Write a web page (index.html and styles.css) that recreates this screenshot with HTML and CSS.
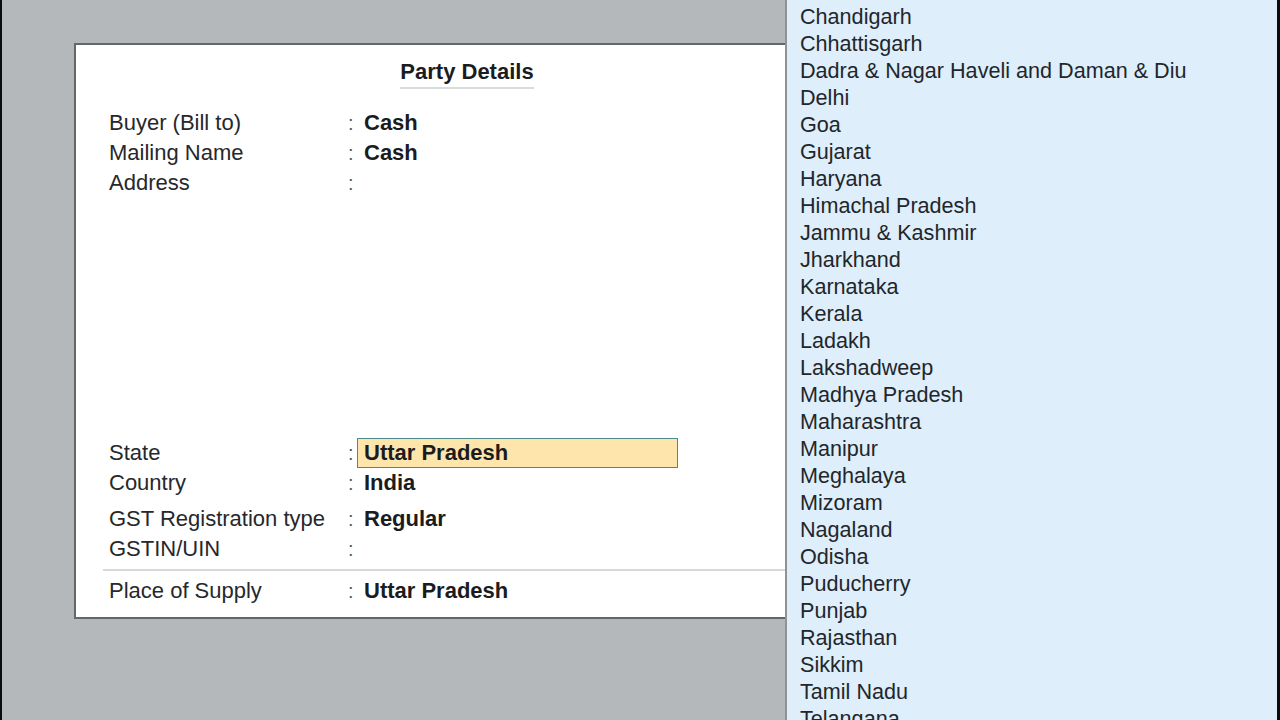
FILE: index.html
```html
<!DOCTYPE html>
<html lang="en">
<head>
<meta charset="utf-8">
<title>Party Details</title>
<link rel="stylesheet" href="styles.css">
</head>
<body>
<div class="screen">
  <div class="edge"></div>
  <main class="workspace">
    <section class="dialog">
      <h1 class="title">Party Details</h1>
      <div class="rows">
        <div class="row"><span class="label">Buyer (Bill to)</span><span class="colon">:</span><span class="value">Cash</span></div>
        <div class="row"><span class="label">Mailing Name</span><span class="colon">:</span><span class="value">Cash</span></div>
        <div class="row"><span class="label">Address</span><span class="colon">:</span><span class="value"></span></div>
        <div class="spacer"></div>
        <div class="row"><span class="label">State</span><span class="colon">:</span><span class="value field">Uttar Pradesh</span></div>
        <div class="row"><span class="label">Country</span><span class="colon">:</span><span class="value">India</span></div>
        <div class="row gap"><span class="label">GST Registration type</span><span class="colon">:</span><span class="value">Regular</span></div>
        <div class="row"><span class="label">GSTIN/UIN</span><span class="colon">:</span><span class="value"></span></div>
        <div class="rule"></div>
        <div class="row"><span class="label">Place of Supply</span><span class="colon">:</span><span class="value">Uttar Pradesh</span></div>
      </div>
    </section>
  </main>
  <aside class="list">
    <ul>
      <li>Chandigarh</li>
      <li>Chhattisgarh</li>
      <li>Dadra &amp; Nagar Haveli and Daman &amp; Diu</li>
      <li>Delhi</li>
      <li>Goa</li>
      <li>Gujarat</li>
      <li>Haryana</li>
      <li>Himachal Pradesh</li>
      <li>Jammu &amp; Kashmir</li>
      <li>Jharkhand</li>
      <li>Karnataka</li>
      <li>Kerala</li>
      <li>Ladakh</li>
      <li>Lakshadweep</li>
      <li>Madhya Pradesh</li>
      <li>Maharashtra</li>
      <li>Manipur</li>
      <li>Meghalaya</li>
      <li>Mizoram</li>
      <li>Nagaland</li>
      <li>Odisha</li>
      <li>Puducherry</li>
      <li>Punjab</li>
      <li>Rajasthan</li>
      <li>Sikkim</li>
      <li>Tamil Nadu</li>
      <li>Telangana</li>
    </ul>
  </aside>
  <div class="edge right"></div>
</div>
</body>
</html>
```

FILE: styles.css
```css
* { box-sizing: border-box; }
html, body { margin: 0; padding: 0; }
body {
  width: 1280px;
  height: 720px;
  overflow: hidden;
  font-family: "Liberation Sans", Arial, sans-serif;
  color: #1d1f22;
}
.screen {
  display: flex;
  width: 1280px;
  height: 720px;
  overflow: hidden;
}
.edge {
  width: 2px;
  background: #0c0c0c;
  flex: none;
}
.edge.right { width: 3px; }
.workspace {
  flex: none;
  width: 783px;
  background: #b4b8bb;
  padding-top: 43px;
  padding-left: 72px;
}
.dialog {
  background: #ffffff;
  border-left: 2px solid #62676b;
  border-top: 2px solid #62676b;
  border-bottom: 2px solid #62676b;
  height: 576px;
  margin-right: -2px;
  padding-left: 33px;
}
.title {
  margin: 0 auto;
  width: max-content;
  font-size: 22px;
  font-weight: bold;
  line-height: 26px;
  padding-top: 14px;
  padding-bottom: 2px;
  border-bottom: 2px solid #d9dcdf;
  color: #1a1c20;
  position: relative;
  left: 19px;
}
.rows {
  margin-top: 19px;
}
.row {
  display: flex;
  align-items: center;
  height: 30px;
  font-size: 22px;
}
.row.gap { margin-top: 6px; }
.label {
  width: 239px;
  flex: none;
  color: #26282b;
}
.colon {
  width: 9px;
  flex: none;
  color: #555a5e;
  font-size: 20px;
}
.value {
  font-weight: bold;
  padding-left: 7px;
  color: #1a1c20;
}
.value.field {
  width: 321px;
  height: 30px;
  line-height: 28px;
  padding-left: 6px;
  background: #fde5ab;
  border: 1px solid #4d8a8c;
}
.spacer { height: 240px; }
.rule {
  height: 2px;
  background: #d6d9dc;
  margin: 5px 0 5px -6px;
}
.list {
  flex: 1;
  background: #deeefb;
  border-left: 2px solid #8e9397;
  overflow: hidden;
}
.list ul {
  list-style: none;
  margin: 0;
  padding: 3px 0 0 13px;
}
.list li {
  font-size: 21.6px;
  line-height: 27px;
  height: 27px;
  color: #22262a;
  white-space: nowrap;
}
```
